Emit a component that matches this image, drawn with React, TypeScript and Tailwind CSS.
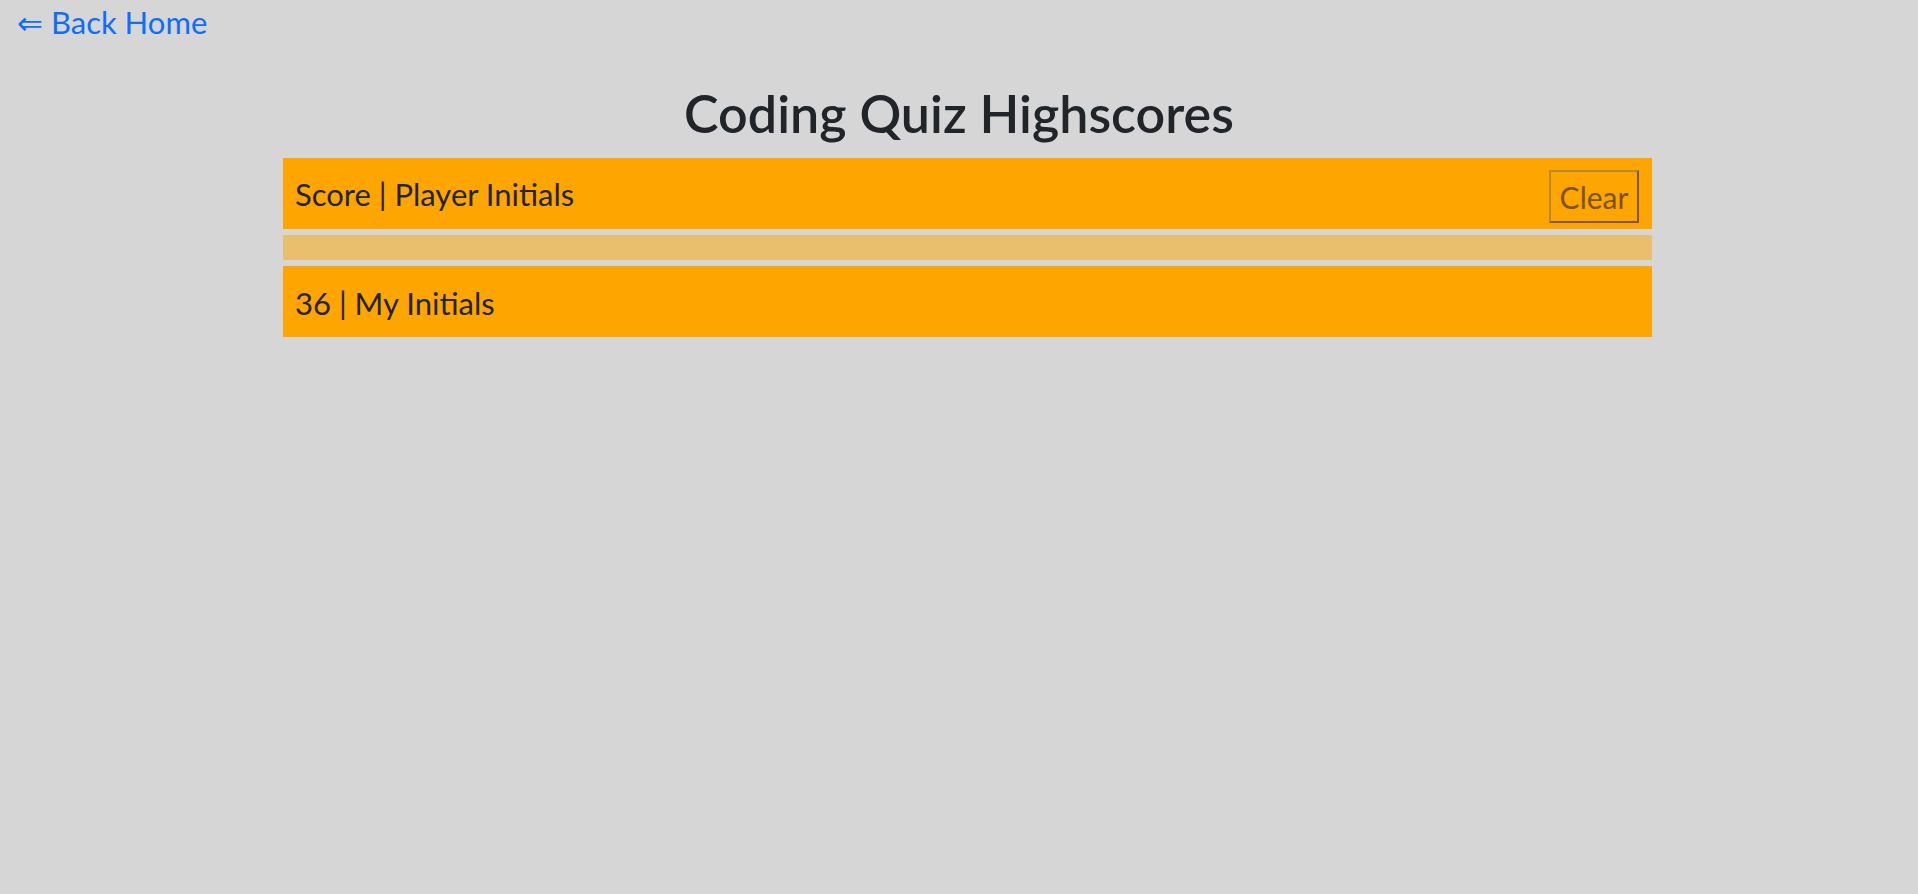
import React from "react"

const scores = [{ score: 36, initials: "My Initials" }]

export default function App() {
  return (
    <div className="min-h-[894px] bg-[#d6d6d6] text-[#212529] font-['Lato','Liberation_Sans',sans-serif]">
      <div className="pl-[17px] h-[45px] text-[31px] leading-[45px]">
        <a href="#" className="text-[#0d6efd]">
          ⇐ Back Home
        </a>
      </div>

      <h1 className="text-center text-[52px] font-semibold leading-[68px] mt-[34px]">
        Coding Quiz Highscores
      </h1>

      <div className="ml-[283px] w-[1369px] mt-[11px] flex flex-col gap-[6px]">
        <div className="h-[71px] bg-[#ffa500] flex items-start justify-between pl-[12px] pr-[13px]">
          <span className="text-[31px] leading-[45px] mt-[14px]">Score | Player Initials</span>
          <button className="mt-[12px] w-[90px] h-[53px] border-2 border-t-[#b58a3a] border-l-[#b58a3a] border-b-[#7a5a22] border-r-[#7a5a22] text-[30px] leading-none text-[#7a5300] bg-transparent">
            Clear
          </button>
        </div>
        <div className="h-[25px] bg-[#e9bf6e]" />
        {scores.map((s) => (
          <div key={s.initials} className="h-[71px] bg-[#ffa500] pl-[12px]">
            <span className="block text-[31px] leading-[45px] pt-[15px]">
              {s.score} | {s.initials}
            </span>
          </div>
        ))}
      </div>
    </div>
  )
}
